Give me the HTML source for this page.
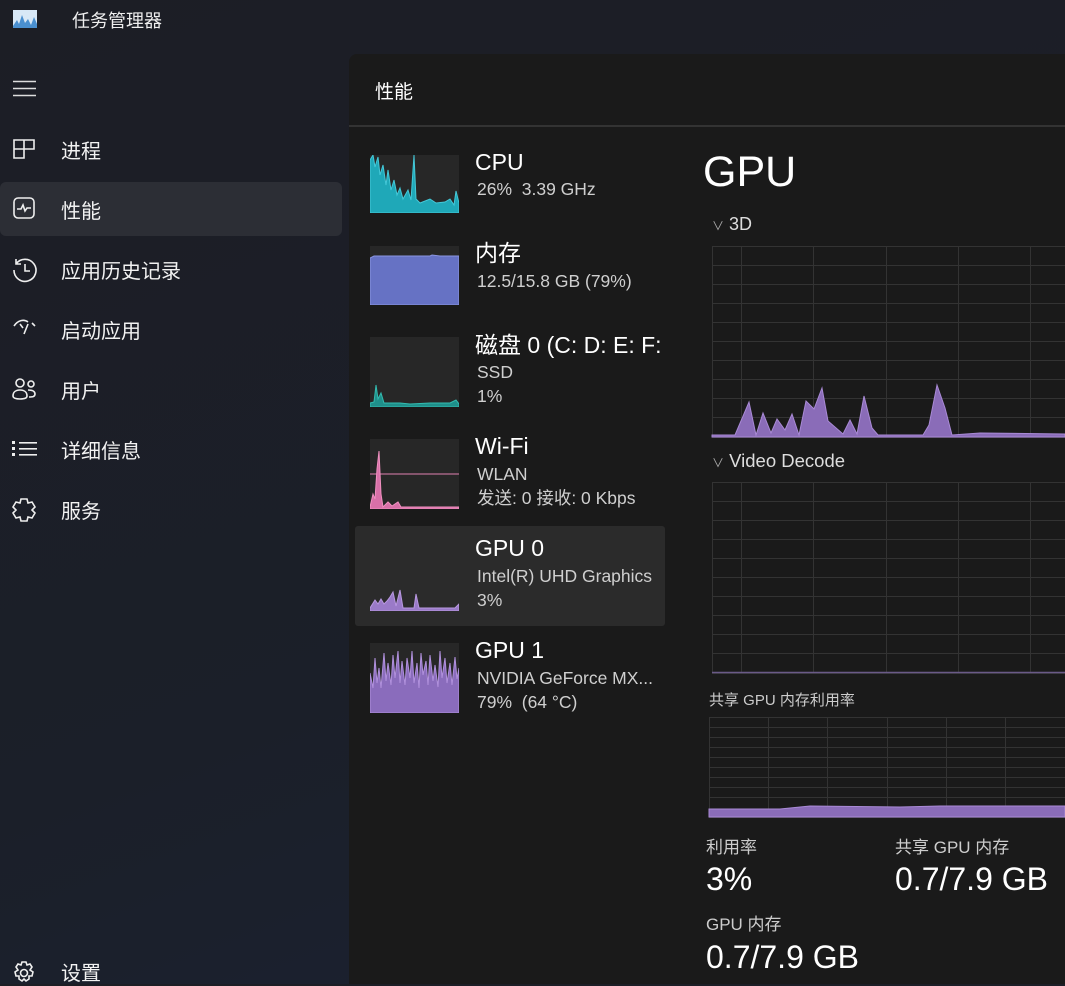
<!DOCTYPE html>
<html><head><meta charset="utf-8"><style>
*{margin:0;padding:0;box-sizing:border-box}
body{width:1065px;height:984px;overflow:hidden;background:linear-gradient(160deg,#1c1e25 0%,#1b1f29 60%,#1b2233 100%);font-family:"Liberation Sans","Noto Sans CJK SC",sans-serif;color:#fff;position:relative}
.a{position:absolute;white-space:nowrap;line-height:1.15}
.nav{font-size:20px;color:#f2f2f2;left:61px}
.ic{position:absolute;left:12px}
.main{position:absolute;left:349px;top:54px;width:716px;height:930px;background:#1a1a1a;border-top-left-radius:8px}
.t{font-size:23px;color:#fff;line-height:27px}
.s{font-size:17.5px;color:#cfcfcf;line-height:21px}
.th{position:absolute;left:370px;width:89px;background:#272727}
</style></head><body>
<svg class="a" style="left:13px;top:10px" width="24" height="18" viewBox="0 0 24 18"><rect width="24" height="18" fill="#d8e8f6"/><path d="M0 16 L4 10 L6 14 L9 5 L12 13 L15 9 L18 15 L21 7 L24 14 L24 18 L0 18Z" fill="#4a90d0"/></svg>
<div class="a" style="left:72px;top:11px;font-size:18px;color:#eee">任务管理器</div>
<svg class="a" style="left:13px;top:80px" width="23" height="17"><path d="M0 1.5H23M0 8.5H23M0 15.5H23" stroke="#ddd" stroke-width="1.6"/></svg>
<div class="a" style="left:0;top:182px;width:342px;height:54px;background:#2c2e35;border-radius:6px"></div>
<svg class="ic" style="top:138px" width="24" height="22" fill="none" stroke="#eee" stroke-width="1.6"><path d="M2 2h20v9H12v9H2zM12 2v9M2 11h10"/></svg>
<div class="a nav" style="top:141px">进程</div>
<svg class="ic" style="top:196px" width="24" height="24" fill="none" stroke="#eee" stroke-width="1.6"><rect x="2" y="2" width="20" height="20" rx="4"/><path d="M5 13h4l2-4 2 6 2-3h4"/></svg>
<div class="a nav" style="top:201px">性能</div>
<svg class="ic" style="top:257px" width="26" height="26" fill="none" stroke="#eee" stroke-width="1.6"><path d="M4 7A11 11 0 1 1 2 13M4 2v5h5M13 7v7h5"/></svg>
<div class="a nav" style="top:261px">应用历史记录</div>
<svg class="ic" style="top:316px" width="26" height="22" fill="none" stroke="#eee" stroke-width="1.6"><path d="M2 10C6 4 12 3 16 6M20 7l3 3M12 18l4-10M8 8l3 4"/></svg>
<div class="a nav" style="top:321px">启动应用</div>
<svg class="ic" style="top:377px" width="26" height="26" fill="none" stroke="#eee" stroke-width="1.6"><circle cx="8" cy="6" r="4"/><circle cx="19" cy="7" r="3"/><path d="M1 19c0-4 3-6 7-6s7 2 7 6c0 2-3 3-7 3s-7-1-7-3zM16 13c4 0 7 1 7 4s-3 3-6 3"/></svg>
<div class="a nav" style="top:381px">用户</div>
<svg class="ic" style="top:440px" width="26" height="18" fill="#eee"><rect x="0" y="1" width="3" height="3"/><rect x="0" y="7" width="3" height="3"/><rect x="0" y="13" width="3" height="3"/><rect x="7" y="2" width="18" height="1.6"/><rect x="7" y="8" width="18" height="1.6"/><rect x="7" y="14" width="18" height="1.6"/></svg>
<div class="a nav" style="top:441px">详细信息</div>
<svg class="ic" style="top:496px" width="26" height="26" fill="none" stroke="#eee" stroke-width="1.6"><path d="M9 3h6l1 4 4-1 3 5-3 3 3 3-3 5-4-1-1 4H9l-1-4-4 1-3-5 3-3-3-3 3-5 4 1z"/></svg>
<div class="a nav" style="top:501px">服务</div>
<svg class="ic" style="top:961px" width="24" height="24" fill="none" stroke="#eee" stroke-width="1.6"><circle cx="12" cy="12" r="3.5"/><path d="M10 1h4l1 3 3-1 2 3-2 3 3 2-1 4-3 0 0 3-3 2-2-2-2 2-3-2 0-3-3 0-1-4 3-2-2-3 2-3 3 1z"/></svg>
<div class="a nav" style="top:963px">设置</div>

<div class="main"></div>
<div class="a" style="left:375px;top:82px;font-size:19px;color:#fff">性能</div>
<div class="a" style="left:349px;top:125px;width:716px;height:2px;background:#333"></div>

<div class="a" style="left:355px;top:526px;width:310px;height:100px;background:#2b2b2b;border-radius:3px"></div>

<svg class="th" style="top:155px" height="58" viewBox="0 0 89 58"><path d="M0 58V5L3 0 5 12 8 2 10 20 13 10 16 30 18 15 21 35 24 25 27 40 30 33 33 44 38 35 41 45 44 0 46 44 50 48 60 44 66 48 75 47 80 44 84 50 86 36 89 48V58Z" fill="#1fa8b8" stroke="#44c8d8"/></svg>
<svg class="th" style="top:246px" height="59" viewBox="0 0 89 59"><path d="M0 59V12L4 10H60L62 9 70 10H89V59Z" fill="#6672c4" stroke="#8a95e0"/></svg>
<svg class="th" style="top:337px" height="70" viewBox="0 0 89 70"><path d="M0 70V66L4 65 6 48 8 62 11 56 14 66 30 66 40 67 60 66 80 66 86 63 89 67V70Z" fill="#1f8f8a" stroke="#33bbb0"/></svg>
<svg class="th" style="top:439px" height="70" viewBox="0 0 89 70"><path d="M0 35H89" stroke="#e080b0" stroke-width="1"/><path d="M0 70V68L3 55 5 60 7 30 9 12 11 55 13 68 18 63 22 67 28 63 31 68 89 68V70Z" fill="#d870a8" stroke="#f090c0"/></svg>
<svg class="th" style="top:542px;background:transparent" height="69" viewBox="0 0 89 69"><path d="M0 69V66L5 58 8 62 11 57 14 62 17 59 20 55 23 50 26 64 28 56 30 48 33 66 44 66 46 52 49 66 85 66 89 62V69Z" fill="#9a7ac8" stroke="#b898e0"/></svg>
<svg class="th" style="top:643px" height="70" viewBox="0 0 89 70"><path d="M0 70V30L3 45 5 15 7 40 9 25 11 45 14 10 16 38 18 20 21 42 23 12 25 35 28 8 30 40 32 18 35 42 37 15 40 35 42 8 44 40 47 20 49 45 51 10 53 32 56 18 58 42 60 12 63 38 65 22 68 44 70 8 72 35 75 15 77 40 80 20 82 42 85 14 87 36 89 25V70Z" fill="#8a6cbc" stroke="#b090dc"/></svg>

<div class="a t" style="left:475px;top:149px">CPU</div>
<div class="a s" style="left:477px;top:179px">26%&nbsp; 3.39 GHz</div>
<div class="a t" style="left:475px;top:240px">内存</div>
<div class="a s" style="left:477px;top:271px">12.5/15.8 GB (79%)</div>
<div class="a t" style="left:475px;top:332px">磁盘 0 (C: D: E: F:</div>
<div class="a s" style="left:477px;top:362px">SSD</div>
<div class="a s" style="left:477px;top:386px">1%</div>
<div class="a t" style="left:475px;top:433px">Wi-Fi</div>
<div class="a s" style="left:477px;top:464px">WLAN</div>
<div class="a s" style="left:477px;top:488px">发送: 0 接收: 0 Kbps</div>
<div class="a t" style="left:475px;top:535px">GPU 0</div>
<div class="a s" style="left:477px;top:566px">Intel(R) UHD Graphics</div>
<div class="a s" style="left:477px;top:590px">3%</div>
<div class="a t" style="left:475px;top:637px">GPU 1</div>
<div class="a s" style="left:477px;top:668px">NVIDIA GeForce MX...</div>
<div class="a s" style="left:477px;top:692px">79%&nbsp; (64 °C)</div>

<div class="a" style="left:703px;top:148px;font-size:43px;color:#fff">GPU</div>
<div class="a" style="left:712px;top:214px;font-size:18px;color:#ddd"><span style="font-size:12px;color:#aaa">∨</span> 3D</div>
<div class="a" style="left:712px;top:450px;font-size:18.5px;color:#ddd"><span style="font-size:12px;color:#aaa">∨</span> Video Decode</div>

<svg class="a" style="left:0;top:0" width="1065" height="984">
<g stroke="#333" stroke-width="1" fill="none">
<rect x="712.5" y="246.5" width="360" height="191"/>
<path d="M741.5 246V437M813.5 246V437M886.5 246V437M958.5 246V437M1030.5 246V437M712 265.5H1065M712 284.5H1065M712 303.5H1065M712 322.5H1065M712 341.5H1065M712 360.5H1065M712 379.5H1065M712 398.5H1065M712 417.5H1065"/>
<rect x="712.5" y="482.5" width="360" height="191"/>
<path d="M741.5 482V673M813.5 482V673M886.5 482V673M958.5 482V673M1030.5 482V673M712 501.5H1065M712 520.5H1065M712 539.5H1065M712 558.5H1065M712 577.5H1065M712 596.5H1065M712 615.5H1065M712 634.5H1065M712 653.5H1065"/>
<rect x="709.5" y="717.5" width="360" height="100"/>
<path d="M768.5 717V817M827.5 717V817M887.5 717V817M946.5 717V817M1005.5 717V817M709 727.5H1065M709 737.5H1065M709 747.5H1065M709 757.5H1065M709 767.5H1065M709 777.5H1065M709 787.5H1065M709 797.5H1065"/>
</g>
<path d="M712 437V435H735L749 402 756 435 763 413 771 433 777 419 785 430 792 414 799 435 806 401 814 409 822 388 828 421 843 434 850 420 857 434 864 396 872 428 878 435H923L929 425 937 385 945 408 952 435 980 433 1065 434V437Z" fill="#8a6cb8" stroke="#a98ad6"/>
<path d="M712 672.5H1065" stroke="#6a5a88" stroke-width="1.5"/>
<path d="M709 817V809H780L810 806 900 807 940 806H1065V817Z" fill="#8a6cb8" stroke="#a98ad6"/>
</svg>

<div class="a" style="left:709px;top:692px;font-size:15px;color:#ccc">共享 GPU 内存利用率</div>
<div class="a" style="left:706px;top:838px;font-size:17px;color:#ccc">利用率</div>
<div class="a" style="left:706px;top:861px;font-size:32px;color:#fff">3%</div>
<div class="a" style="left:895px;top:838px;font-size:17px;color:#ccc">共享 GPU 内存</div>
<div class="a" style="left:895px;top:861px;font-size:32px;color:#fff">0.7/7.9 GB</div>
<div class="a" style="left:706px;top:915px;font-size:17px;color:#ccc">GPU 内存</div>
<div class="a" style="left:706px;top:939px;font-size:32px;color:#fff">0.7/7.9 GB</div>
</body></html>
